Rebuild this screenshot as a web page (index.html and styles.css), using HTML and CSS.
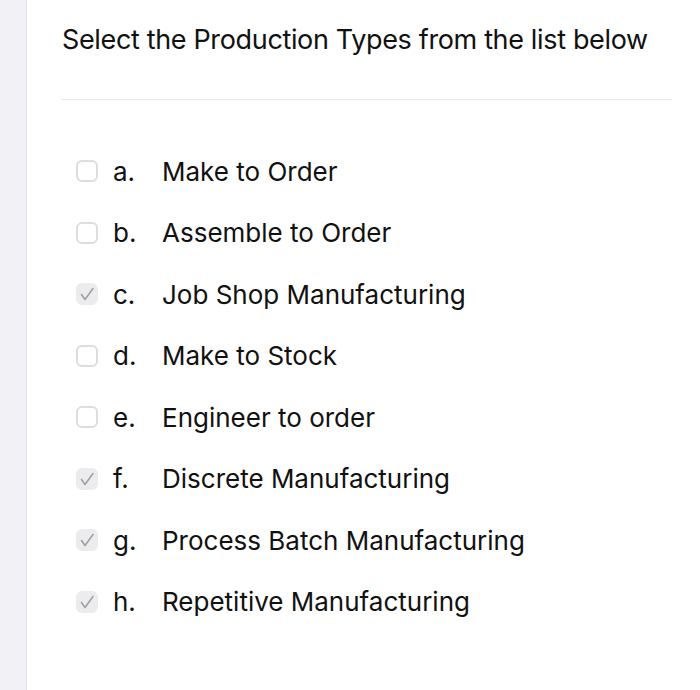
FILE: index.html
```html
<!DOCTYPE html>
<html>
<head>
<meta charset="utf-8">
<link rel="stylesheet" href="styles.css">
</head>
<body>
<div class="page">
  <div class="rail"></div>
  <main class="content">
    <h1 class="title">Select the Production Types from the list below</h1>
    <hr class="divider">
    <ul class="options">
      <li class="option"><span class="box"></span><span class="letter">a.</span><span class="label">Make to Order</span></li>
      <li class="option"><span class="box"></span><span class="letter">b.</span><span class="label">Assemble to Order</span></li>
      <li class="option"><span class="box checked"><svg viewBox="0 0 22 22"><path d="M5.5 11.5 L9 16.5 L17 5.5" /></svg></span><span class="letter">c.</span><span class="label">Job Shop Manufacturing</span></li>
      <li class="option"><span class="box"></span><span class="letter">d.</span><span class="label">Make to Stock</span></li>
      <li class="option"><span class="box"></span><span class="letter">e.</span><span class="label">Engineer to order</span></li>
      <li class="option"><span class="box checked"><svg viewBox="0 0 22 22"><path d="M5.5 11.5 L9 16.5 L17 5.5" /></svg></span><span class="letter">f.</span><span class="label">Discrete Manufacturing</span></li>
      <li class="option"><span class="box checked"><svg viewBox="0 0 22 22"><path d="M5.5 11.5 L9 16.5 L17 5.5" /></svg></span><span class="letter">g.</span><span class="label">Process Batch Manufacturing</span></li>
      <li class="option"><span class="box checked"><svg viewBox="0 0 22 22"><path d="M5.5 11.5 L9 16.5 L17 5.5" /></svg></span><span class="letter">h.</span><span class="label">Repetitive Manufacturing</span></li>
    </ul>
  </main>
</div>
</body>
</html>
```

FILE: styles.css
```css
html, body {
  margin: 0;
  padding: 0;
  background: #ffffff;
}
body {
  font-family: Inter, "Liberation Sans", Arial, sans-serif;
  color: #111111;
}
.page {
  display: flex;
  width: 700px;
  height: 690px;
  overflow: hidden;
}
.rail {
  width: 26px;
  flex: none;
  background: #f2f2f6;
  border-right: 1px solid #e2e2e8;
}
.content {
  flex: 1;
  padding: 0 0 0 35px;
}
.title {
  margin: 24px 0 0 0;
  font-size: 27px;
  font-weight: normal;
  line-height: 32px;
  letter-spacing: -0.35px;
  white-space: nowrap;
}
.divider {
  margin: 43px 0 0 0;
  width: 610px;
  border: 0;
  border-top: 1px solid #e8e8ea;
  height: 0;
}
.options {
  list-style: none;
  margin: 0;
  padding: 57px 0 0 14px;
  display: flex;
  flex-direction: column;
  gap: 33.5px;
}
.option {
  display: flex;
  align-items: center;
  height: 28px;
  font-size: 26px;
}
.box {
  width: 18px;
  height: 18px;
  border: 2px solid #dddddf;
  border-radius: 6px;
  background: #ffffff;
  flex: none;
  display: flex;
  align-items: center;
  justify-content: center;
}
.box.checked {
  background: #ececee;
  border-color: #ececee;
}
.box svg {
  width: 22px;
  height: 22px;
  flex: none;
}
.box svg path {
  fill: none;
  stroke: #a0a0a4;
  stroke-width: 1.6;
  stroke-linecap: round;
  stroke-linejoin: round;
}
.letter {
  width: 49px;
  margin-left: 15px;
  flex: none;
}
.label {
  white-space: nowrap;
}
```
